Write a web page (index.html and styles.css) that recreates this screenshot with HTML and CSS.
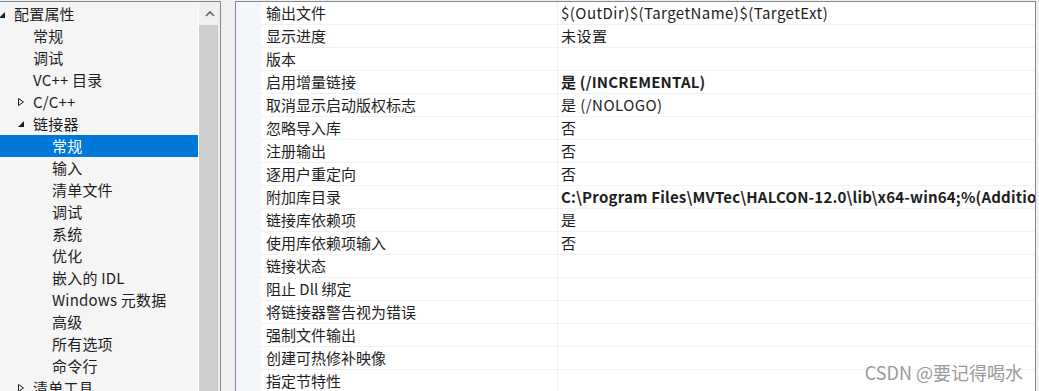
FILE: index.html
```html
<!DOCTYPE html>
<html lang="zh-CN">
<head>
    <meta charset="UTF-8">
    <title>属性页</title>
    <link rel="stylesheet" href="styles.css">
</head>
<body>
<div class="window">
    <div class="tree-panel">
        <div class="tree">
            <div class="node lv0"><span class="arrow"><svg width="7" height="7"><polygon points="6,0 6,6 0,6" fill="#1e1e1e"/></svg></span>配置属性</div>
            <div class="node lv1"><span class="arrow"></span>常规</div>
            <div class="node lv1"><span class="arrow"></span>调试</div>
            <div class="node lv1"><span class="arrow"></span>VC++ 目录</div>
            <div class="node lv1"><span class="arrow"><svg width="7" height="9"><polygon points="0.5,0.5 5.5,4 0.5,7.5" fill="none" stroke="#1e1e1e"/></svg></span>C/C++</div>
            <div class="node lv1"><span class="arrow"><svg width="7" height="7"><polygon points="6,0 6,6 0,6" fill="#1e1e1e"/></svg></span>链接器</div>
            <div class="node lv2 selected"><span class="arrow"></span>常规</div>
            <div class="node lv2"><span class="arrow"></span>输入</div>
            <div class="node lv2"><span class="arrow"></span>清单文件</div>
            <div class="node lv2"><span class="arrow"></span>调试</div>
            <div class="node lv2"><span class="arrow"></span>系统</div>
            <div class="node lv2"><span class="arrow"></span>优化</div>
            <div class="node lv2"><span class="arrow"></span>嵌入的 IDL</div>
            <div class="node lv2"><span class="arrow"></span>Windows 元数据</div>
            <div class="node lv2"><span class="arrow"></span>高级</div>
            <div class="node lv2"><span class="arrow"></span>所有选项</div>
            <div class="node lv2"><span class="arrow"></span>命令行</div>
            <div class="node lv1"><span class="arrow"><svg width="7" height="9"><polygon points="0.5,0.5 5.5,4 0.5,7.5" fill="none" stroke="#1e1e1e"/></svg></span>清单工具</div>
        </div>
        <div class="scrollbar">
            <div class="scroll-up"><svg width="10" height="6"><polyline points="1,5 5,1 9,5" fill="none" stroke="#606060" stroke-width="1.6"/></svg></div>
            <div class="scroll-thumb"></div>
        </div>
    </div>

    <div class="grid-panel">
        <div class="gutter"></div>
        <div class="props">
            <div class="row"><div class="name">输出文件</div><div class="value">$(OutDir)$(TargetName)$(TargetExt)</div></div>
            <div class="row"><div class="name">显示进度</div><div class="value">未设置</div></div>
            <div class="row"><div class="name">版本</div><div class="value"></div></div>
            <div class="row"><div class="name">启用增量链接</div><div class="value bold">是 (/INCREMENTAL)</div></div>
            <div class="row"><div class="name">取消显示启动版权标志</div><div class="value">是 (/NOLOGO)</div></div>
            <div class="row"><div class="name">忽略导入库</div><div class="value">否</div></div>
            <div class="row"><div class="name">注册输出</div><div class="value">否</div></div>
            <div class="row"><div class="name">逐用户重定向</div><div class="value">否</div></div>
            <div class="row"><div class="name">附加库目录</div><div class="value bold">C:\Program Files\MVTec\HALCON-12.0\lib\x64-win64;%(AdditionalLibraryDirectories)</div></div>
            <div class="row"><div class="name">链接库依赖项</div><div class="value">是</div></div>
            <div class="row"><div class="name">使用库依赖项输入</div><div class="value">否</div></div>
            <div class="row"><div class="name">链接状态</div><div class="value"></div></div>
            <div class="row"><div class="name">阻止 Dll 绑定</div><div class="value"></div></div>
            <div class="row"><div class="name">将链接器警告视为错误</div><div class="value"></div></div>
            <div class="row"><div class="name">强制文件输出</div><div class="value"></div></div>
            <div class="row"><div class="name">创建可热修补映像</div><div class="value"></div></div>
            <div class="row"><div class="name">指定节特性</div><div class="value"></div></div>
        </div>
    </div>

    <div class="watermark">CSDN @要记得喝水</div>
</div>
</body>
</html>
```

FILE: styles.css
```css
body {
    margin: 0;
    background-color: #f0f0f0;
    font-family: "Noto Sans CJK SC", "Noto Sans", sans-serif;
    font-size: 15px;
    color: #1e1e1e;
    overflow: hidden;
}

.window {
    position: relative;
    display: flex;
    gap: 14px;
    height: 391px;
    padding-top: 1px;
    padding-right: 3px;
    box-sizing: border-box;
}

/* left tree */

.tree-panel {
    display: flex;
    width: 221px;
    flex-shrink: 0;
    border-top: 1px solid #828790;
    border-right: 1px solid #828790;
    box-sizing: border-box;
    overflow: hidden;
}

.tree {
    width: 198px;
    padding-top: 1px;
    background-color: #f5f5f5;
    border-right: 1px solid #ffffff;
    overflow: hidden;
    letter-spacing: 0.2px;
}

.node {
    display: flex;
    align-items: center;
    height: 22px;
    line-height: 22px;
    white-space: nowrap;
}

.node.lv1 { padding-left: 19px; }
.node.lv2 { padding-left: 38px; }

.node.selected {
    background-color: #0078d7;
    color: #ffffff;
}

.arrow {
    display: inline-flex;
    align-items: center;
    width: 14px;
    height: 22px;
    flex-shrink: 0;
}

.lv0 .arrow svg { margin-left: -1px; margin-top: 3px; }
.lv1 .arrow svg { margin-left: -1px; }

.scrollbar {
    display: flex;
    flex-direction: column;
    width: 21px;
    background-color: #f0f0f0;
}

.scroll-up {
    display: flex;
    justify-content: center;
    align-items: center;
    height: 23px;
}

.scroll-thumb {
    flex: 1;
    margin: 0 2px 0 0;
    background-color: #cdcdcd;
}

/* property grid */

.grid-panel {
    display: flex;
    flex: 1;
    min-width: 0;
    border-top: 1px solid #828790;
    border-left: 1px solid #828790;
    border-right: 1px solid #828790;
    background-color: #ffffff;
    overflow: hidden;
}

.gutter {
    width: 25px;
    flex-shrink: 0;
    background-color: #f3f6fb;
}

.props {
    flex: 1;
    min-width: 0;
}

.row {
    display: flex;
    height: 22px;
    border-bottom: 1px solid #eef1f6;
    line-height: 22px;
}

.name {
    width: 297px;
    flex-shrink: 0;
    padding-left: 5px;
    box-sizing: border-box;
    border-right: 1px solid #eef0f4;
    white-space: nowrap;
}

.value {
    flex: 1;
    padding-left: 3px;
    white-space: nowrap;
    overflow: hidden;
    letter-spacing: 0.45px;
}

.bold {
    font-weight: bold;
    letter-spacing: 0.2px;
}

.watermark {
    position: absolute;
    right: 16px;
    bottom: 6px;
    font-size: 18px;
    color: #9a9a9a;
    text-shadow: 0 0 2px #ffffff;
}
```
